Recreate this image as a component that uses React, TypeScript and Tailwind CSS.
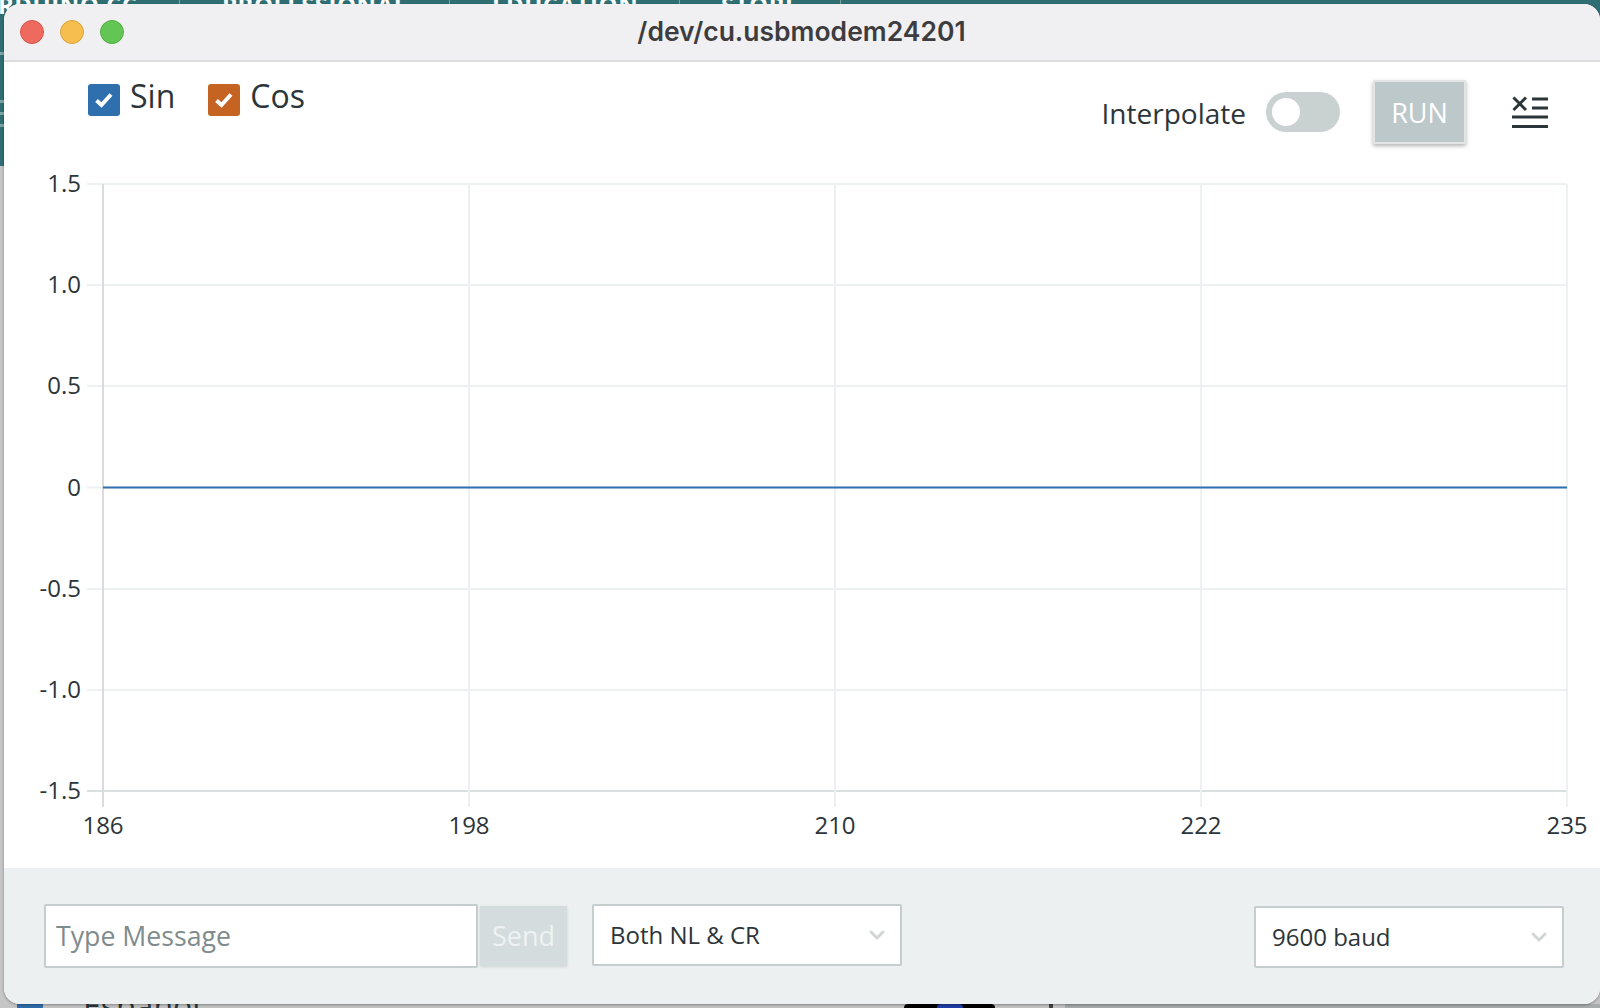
import { ChevronDown } from "lucide-react";

const Y_LABELS = ["1.5", "1.0", "0.5", "0", "-0.5", "-1.0", "-1.5"];
const X_LABELS = ["186", "198", "210", "222", "235"];
const Y_TICKS = [184, 285, 386, 487.5, 589, 690, 791];
const X_TICKS = [103, 469, 835, 1201, 1567];
const LEFT_MARKS = ["top-[52px]", "top-[100px]", "top-[112px]", "top-[124px]"];
const TOP_DIVIDERS = ["left-[179px]", "left-[449px]", "left-[679px]", "left-[840px]"];

function Check({ color, label }: { color: string; label: string }) {
  return (
    <div className="flex items-center gap-[10px]">
      <div className={`w-8 h-8 rounded-[3px] flex items-center justify-center ${color}`}>
        <svg width="20" height="18" viewBox="0 0 20 18" fill="none">
          <path d="M2.5 9.5 L7.5 14 L17 3.5" stroke="#fff" strokeWidth="4" />
        </svg>
      </div>
      <span className="text-[32px] leading-none text-[#2c3539] -mt-[8px]">{label}</span>
    </div>
  );
}

// the plot area, in page coordinates through the viewBox
function Chart() {
  return (
    <svg className="block shrink-0" width="1596" height="708" viewBox="4 160 1596 708" fontFamily="'Open Sans', sans-serif" fontSize="24" fill="#2c3539">
      {Y_TICKS.map((y, i) => (
        <g key={y}>
          <line x1="87" x2="1567" y1={y} y2={y} stroke={i === 6 ? "#dadfdf" : "#edf1f1"} strokeWidth="2" />
          <text x="81" y={y + 8} textAnchor="end">{Y_LABELS[i]}</text>
        </g>
      ))}
      {X_TICKS.map((x, i) => (
        <g key={x}>
          <line x1={x} x2={x} y1="184" y2="807" stroke={i === 0 ? "#d8dcdc" : "#edf1f1"} strokeWidth="2" />
          <text x={x} y="834" textAnchor="middle">{X_LABELS[i]}</text>
        </g>
      ))}
      <line x1="103" x2="1567" y1="487.5" y2="487.5" stroke="#2f6fad" strokeWidth="2" />
    </svg>
  );
}

function Dropdown({ label, className }: { label: string; className: string }) {
  return (
    <div className={`h-[62px] bg-white border-2 border-[#c5cdce] rounded-[2px] flex items-center justify-between pl-[16px] pr-[11px] ${className}`}>
      <span className="text-[24px] text-[#2c3539]">{label}</span>
      <ChevronDown size={24} strokeWidth={3} className="text-[#d3d6d6]" />
    </div>
  );
}

export default function App() {
  return (
    <div className="relative w-[1600px] h-[1008px] overflow-hidden bg-[#c6c6c6]" style={{ fontFamily: "'Open Sans', sans-serif" }}>
      {/* what is behind the window */}
      <div className="absolute left-0 top-0 w-full h-[166px] bg-[#2f6f73]" />
      {LEFT_MARKS.map((m) => (
        <div key={m} className={`absolute left-0 w-[4px] h-[3px] bg-[#7fa5a7] ${m}`} />
      ))}
      {TOP_DIVIDERS.map((d) => (
        <div key={d} className={`absolute top-0 w-px h-[4px] bg-[#7fa5a7] ${d}`} />
      ))}
      <div className="absolute -left-[2px] -top-[13px] w-full flex text-white font-bold text-[24px] tracking-[0.5px] whitespace-nowrap">
        <span className="w-[224px]">RDUINO CC</span>
        <span className="w-[270px]">PROFESSIONAL</span>
        <span className="w-[229px]">EDUCATION</span>
        <span>STORE</span>
      </div>
      <div className="absolute left-[1065px] bottom-0 right-0 h-[4px] bg-[#a8acac]" />
      <div className="absolute left-[17px] bottom-0 w-[26px] h-[5px] bg-[#2f6fad]" />
      <span className="absolute left-[83px] top-[990px] text-[32px] leading-none text-[#2c3539]">Español</span>
      <div className="absolute left-[904px] bottom-0 w-[91px] h-[4px] rounded-t-[4px] bg-black flex justify-center">
        <div className="w-[26px] h-[4px] rounded-t-[6px] bg-[#1f3fa8]" />
      </div>
      <div className="absolute left-[1049px] bottom-0 w-[4px] h-[4px] bg-[#444]" />

      {/* plotter window */}
      <div className="absolute left-[4px] top-[4px] w-[1596px] h-[1000px] rounded-[16px] overflow-hidden bg-white flex flex-col shadow-[0_1px_3px_rgba(0,0,0,0.35)]">
        <div className="relative h-[58px] shrink-0 bg-[#f0f0f2] border-b-2 border-[#dcdcdc] flex items-center justify-center">
          <div className="absolute left-[16px] top-[16px] flex gap-[16px]">
            <div className="w-6 h-6 rounded-full bg-[#ee6a5f] border border-[#d8544a]" />
            <div className="w-6 h-6 rounded-full bg-[#f5be4f] border border-[#dca33a]" />
            <div className="w-6 h-6 rounded-full bg-[#62c554] border border-[#52ad44]" />
          </div>
          <span className="text-[26.5px] font-semibold text-[#3d3d3f] -ml-[1px] -mt-[1px]" style={{ fontFamily: "Inter, sans-serif" }}>/dev/cu.usbmodem24201</span>
        </div>

        <div className="h-[98px] shrink-0 flex items-start justify-between pt-[22px] pl-[84px] pr-[52px]">
          <div className="flex gap-[32px]">
            <Check color="bg-[#2f6fad]" label="Sin" />
            <div className="ml-px">
              <Check color="bg-[#c56323]" label="Cos" />
            </div>
          </div>
          <div className="flex items-center -mt-[4px]">
            <span className="text-[28px] text-[#2c3539] mr-[20px] mt-[2px]">Interpolate</span>
            <div className="w-[74px] h-10 rounded-full bg-[#c9d2d1] flex items-center pl-[6px]">
              <div className="w-7 h-7 rounded-full bg-white" />
            </div>
            <button className="ml-[33px] w-[93px] h-[64px] bg-[#bcc8ca] border-2 border-[#e3e5e5] text-white text-[27px] pt-[2px] shadow-[0_2px_4px_rgba(0,0,0,0.3)]">RUN</button>
            <svg className="ml-[46px]" width="36" height="32" viewBox="0 0 36 32" fill="none" stroke="#2c3539" strokeWidth="3">
              <path d="M1.5 1.5 L14 14 M14 1.5 L1.5 14" />
              <path d="M20 3 H36 M20 12 H36 M0 21 H36 M0 30.5 H36" />
            </svg>
          </div>
        </div>

        <Chart />

        <div className="flex-1 bg-[#ecf0f1] flex items-start pl-[40px] pr-[36px] pt-[36px]">
          <div className="w-[434px] h-[64px] bg-white border-2 border-[#c5cdce] rounded-[2px] flex items-center pl-[10px] text-[26.7px] text-[#7f8c8d]">Type Message</div>
          <button className="ml-[2px] mt-[2px] w-[87px] h-[60px] bg-[#d5dcde] text-[#eef2f2] text-[27px] shadow-[0_1px_3px_rgba(0,0,0,0.12)]">Send</button>
          <Dropdown label="Both NL & CR" className="ml-[25px] w-[310px]" />
          <Dropdown label="9600 baud" className="ml-auto mt-[2px] w-[310px]" />
        </div>
      </div>
    </div>
  );
}
